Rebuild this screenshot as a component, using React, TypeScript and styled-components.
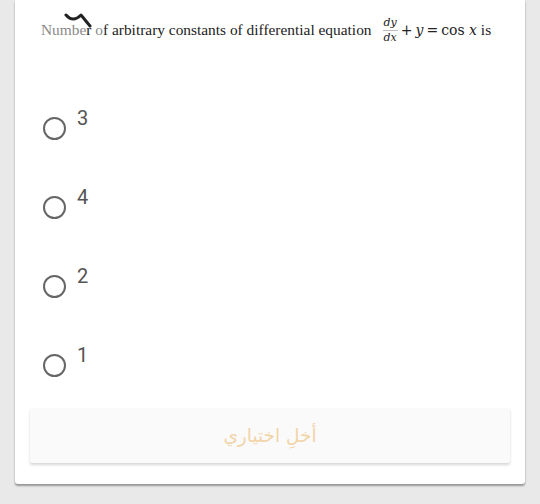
import React from "react";
import styled, { createGlobalStyle } from "styled-components";

const Global = createGlobalStyle`
  html, body { margin: 0; padding: 0; background: #e9e9e9; }
  body { width: 540px; height: 504px; overflow: hidden; }
`;

const Card = styled.div`
  margin: 0 15px;
  width: 510px;
  height: 484px;
  box-sizing: border-box;
  background: #fff;
  border-radius: 0 0 3px 3px;
  box-shadow: 0 2px 2px rgba(0, 0, 0, 0.35), 0 0 2px rgba(0, 0, 0, 0.08);
  padding: 0 15px 21px;
  display: flex;
  flex-direction: column;
`;

const Question = styled.div`
  position: relative;
  height: 50px;
  box-sizing: border-box;
  padding: 17px 0 0 11px;
  font-family: "Liberation Serif", "Times New Roman", serif;
  font-size: 15.4px;
  line-height: 20px;
  color: #222;
  white-space: nowrap;
`;

const Faded = styled.span`
  color: #8a8a8a;
`;

const Mark = styled.svg`
  position: absolute;
  left: 34px;
  top: 10px;
`;

const Fraction = styled.span`
  display: inline-flex;
  flex-direction: column;
  align-items: center;
  vertical-align: middle;
  margin: 0 0 0 11px;
  font-family: "DejaVu Serif", "Liberation Serif", serif;
  font-style: italic;
  font-size: 11px;
  line-height: 13px;
  position: relative;
  top: -1px;
`;

const Num = styled.span`
  border-bottom: 1px solid #bbb;
  padding: 0 1px 1px;
`;

const Math = styled.span`
  font-family: "DejaVu Serif", "Liberation Serif", serif;
  font-size: 14px;
`;

const Op = styled.span`
  margin: 0 3px;
`;

const Var = styled.i``;

const Options = styled.div`
  margin-top: 58px;
  display: flex;
  flex-direction: column;
  gap: 39px;
`;

const Option = styled.label`
  display: flex;
  align-items: flex-start;
  height: 40px;
  padding-left: 13px;
  cursor: pointer;
`;

const Circle = styled.span`
  box-sizing: border-box;
  width: 23px;
  height: 23px;
  margin-top: 9px;
  border: 2.5px solid #666;
  border-radius: 50%;
`;

const Label = styled.span`
  margin-left: 11px;
  margin-top: -2px;
  font-family: Roboto, "Liberation Sans", sans-serif;
  font-size: 20px;
  line-height: 24px;
  color: #555;
`;

const Clear = styled.button`
  margin-top: 23px;
  height: 55px;
  width: 100%;
  border: none;
  background: #fafafa;
  box-shadow: 0 2px 3px rgba(0, 0, 0, 0.16);
  border-radius: 2px;
  font-family: "DejaVu Sans", "Noto Sans", sans-serif;
  font-size: 18.5px;
  color: #f2d4a9;
  direction: rtl;
  display: flex;
  align-items: center;
  justify-content: center;
`;

const options = ["3", "4", "2", "1"];

export default function App() {
  return (
    <>
      <Global />
      <Card>
        <Question>
          <Mark width="30" height="20" viewBox="0 0 30 20">
            <path d="M2 5 Q9 13 17 5 L26 16" fill="none" stroke="#222" strokeWidth="3" strokeLinecap="round" strokeLinejoin="round" />
          </Mark>
          <Faded>Numbe</Faded>r <Faded>o</Faded>f arbitrary constants of differential equation
          <Fraction>
            <Num>dy</Num>
            <span>dx</span>
          </Fraction>
          <Math>
            <Op>+</Op><Var>y</Var><Op>=</Op>cos <Var>x</Var>
          </Math>{" "}
          is
        </Question>
        <Options>
          {options.map((o) => (
            <Option key={o}>
              <Circle />
              <Label>{o}</Label>
            </Option>
          ))}
        </Options>
        <Clear>أخلِ اختياري</Clear>
      </Card>
    </>
  );
}
